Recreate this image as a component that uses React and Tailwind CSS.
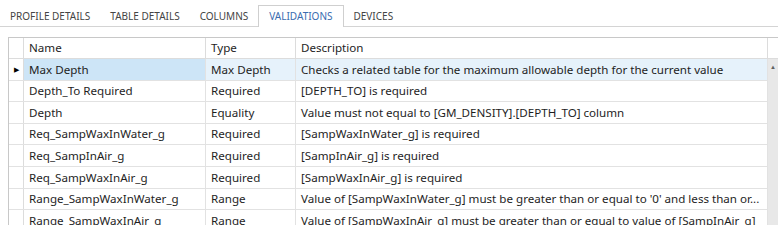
import React from 'react';

const tabs = ['PROFILE DETAILS', 'TABLE DETAILS', 'COLUMNS', 'VALIDATIONS', 'DEVICES'];

const rows = [
  ['Max Depth', 'Max Depth', 'Checks a related table for the maximum allowable depth for the current value'],
  ['Depth_To Required', 'Required', '[DEPTH_TO] is required'],
  ['Depth', 'Equality', 'Value must not equal to [GM_DENSITY].[DEPTH_TO] column'],
  ['Req_SampWaxInWater_g', 'Required', '[SampWaxInWater_g] is required'],
  ['Req_SampInAir_g', 'Required', '[SampInAir_g] is required'],
  ['Req_SampWaxInAir_g', 'Required', '[SampWaxInAir_g] is required'],
  ['Range_SampWaxInWater_g', 'Range', "Value of [SampWaxInWater_g] must be greater than or equal to '0' and less than or..."],
  ['Range_SampWaxInAir_g', 'Range', 'Value of [SampWaxInAir_g] must be greater than or equal to value of [SampInAir_g]'],
];

export default function App() {
  return (
    <div className="w-[778px] h-[225px] overflow-hidden bg-white text-[#1e1e1e] font-['Noto_Sans','Open_Sans',sans-serif]">
      {/* Tabs */}
      <div className="flex items-end h-[27px] pt-[6px] border-b border-[#d4d4d4] text-[10px] text-[#444]">
        {tabs.map((t) => (
          <div
            key={t}
            className={`h-[21px] flex items-center px-[10px] -mb-px ${
              t === 'VALIDATIONS'
                ? 'border border-b-0 border-[#cfcfcf] bg-white text-[#3a6cb0] h-[22px]'
                : ''
            }`}
          >
            {t}
          </div>
        ))}
      </div>

      {/* Grid */}
      <div className="mt-[10px] ml-[8px] flex border-t border-l border-[#c8c8c8] text-[11.6px]">
        <div className="flex-1">
          {/* Header */}
          <div className="flex h-[21px] border-b border-[#dcdcdc]">
            <div className="w-[15px] border-r border-[#dcdcdc]" />
            <div className="w-[182px] px-[5px] flex items-center border-r border-[#dcdcdc]">Name</div>
            <div className="w-[90px] px-[5px] flex items-center border-r border-[#dcdcdc]">Type</div>
            <div className="flex-1 px-[5px] flex items-center border-r border-[#dcdcdc]">Description</div>
          </div>
          {rows.map((r, i) => {
            const sel = i === 0;
            return (
              <div key={i} className="flex h-[21.6px] border-b border-[#e2e2e2]">
                <div className="w-[15px] border-r border-[#dcdcdc] flex items-center justify-center">
                  {sel && <span className="text-[7px] leading-none text-black">▶</span>}
                </div>
                <div className={`w-[182px] px-[5px] flex items-center border-r border-[#e2e2e2] whitespace-nowrap ${sel ? 'bg-[#cde5f7]' : ''}`}>
                  {r[0]}
                </div>
                <div className={`w-[90px] px-[5px] flex items-center border-r border-[#e2e2e2] whitespace-nowrap ${sel ? 'bg-[#e6f2fb]' : ''}`}>
                  {r[1]}
                </div>
                <div className={`flex-1 px-[5px] flex items-center border-r border-[#e2e2e2] whitespace-nowrap overflow-hidden ${sel ? 'bg-[#e6f2fb]' : ''}`}>
                  {r[2]}
                </div>
              </div>
            );
          })}
        </div>
        {/* Scrollbar */}
        <div className="w-[10px] flex flex-col">
          <div className="h-[21px] border-b border-[#dcdcdc]" />
          <div className="flex-1 bg-[#e8e8e8] flex justify-center pt-[5px]">
            <span className="text-[6px] leading-none text-[#606060]">▲</span>
          </div>
        </div>
      </div>
    </div>
  );
}
